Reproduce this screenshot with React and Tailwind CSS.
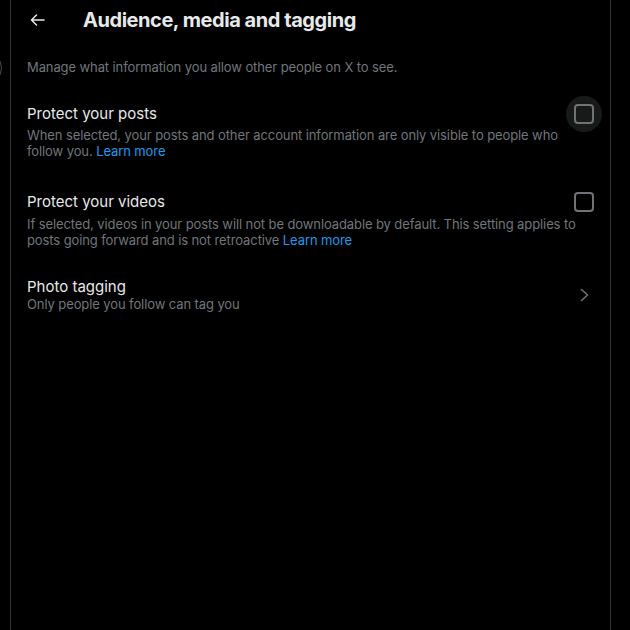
import { useState } from 'react';

const font = { fontFamily: 'Inter, "Noto Sans", sans-serif' };

const Checkbox = ({ checked, onChange, hovered }) => (
  <div className="relative h-[20px] w-[20px] shrink-0">
    {hovered && (
      <span className="absolute left-[-8px] top-[-8px] h-[36px] w-[36px] rounded-full bg-[#181919]" />
    )}
    <button
      type="button"
      onClick={onChange}
      className={`relative block h-[20px] w-[20px] rounded-[4px] border-2 ${checked ? 'border-[#1d9bf0] bg-[#1d9bf0]' : 'border-[#6e7378]'}`}
    />
  </div>
);

const LearnMore = () => <span className="text-[#1d9bf0]">Learn more</span>;

export default function App() {
  const [protectPosts, setProtectPosts] = useState(false);
  const [protectVideos, setProtectVideos] = useState(false);

  return (
    <div className="flex min-h-[630px] w-[630px] bg-black" style={font}>
      {/* edge of the left nav */}
      <div className="w-[10px] shrink-0 overflow-hidden">
        <div className="ml-[-32px] mt-[52px] h-[32px] w-[34px] rounded-full border border-[#4a4d50]" />
      </div>

      <main className="min-h-[630px] w-[601px] shrink-0 border-x border-[#2f3336]">
        {/* Header */}
        <div className="flex h-[40px] items-center px-4">
          <div className="flex w-[56px] items-center pl-[3px]">
            <svg width="15" height="12" viewBox="0 0 15 12" fill="none" stroke="#e7e9ea" strokeWidth="1.5" strokeLinecap="round" strokeLinejoin="round">
              <path d="M14 6H1.5M6.5 1L1.5 6l5 5" />
            </svg>
          </div>
          <h1 className="text-[20px] font-bold leading-6 tracking-[-0.45px] text-[#e7e9ea]">Audience, media and tagging</h1>
        </div>

        <p className="mt-[19px] px-4 text-[13px] leading-4 tracking-[-0.1px] text-[#71767b]">
          Manage what information you allow other people on X to see.
        </p>

        {/* Protect your posts */}
        <div className="mt-[29px] px-4">
          <div className="flex items-start justify-between">
            <p className="text-[15px] leading-5 text-[#e7e9ea]">Protect your posts</p>
            <Checkbox checked={protectPosts} onChange={() => setProtectPosts(!protectPosts)} hovered />
          </div>
          <p className="mt-[3px] text-[13px] leading-4 tracking-[-0.1px] text-[#71767b]">
            When selected, your posts and other account information are only visible to people who follow you. <LearnMore />
          </p>
        </div>

        {/* Protect your videos */}
        <div className="mt-[33px] px-4">
          <div className="flex items-start justify-between">
            <p className="text-[15px] leading-5 text-[#e7e9ea]">Protect your videos</p>
            <Checkbox checked={protectVideos} onChange={() => setProtectVideos(!protectVideos)} />
          </div>
          <p className="mt-[4px] text-[13px] leading-4 tracking-[-0.1px] text-[#71767b]">
            If selected, videos in your posts will not be downloadable by default. This setting applies to posts going forward and is not retroactive <LearnMore />
          </p>
        </div>

        {/* Photo tagging */}
        <div className="mt-[29px] flex items-center gap-4 px-4">
          <div className="min-w-0 flex-1">
            <p className="text-[15px] leading-5 text-[#e7e9ea]">Photo tagging</p>
            <p className="-mt-[1px] text-[13px] leading-4 tracking-[-0.1px] text-[#71767b]">Only people you follow can tag you</p>
          </div>
          <svg width="9" height="14" viewBox="0 0 9 14" fill="none" stroke="#71767b" strokeWidth="1.5" strokeLinecap="round" strokeLinejoin="round" className="mr-[5px]">
            <path d="M1.5 1.5L7.5 7l-6 5.5" />
          </svg>
        </div>
      </main>
    </div>
  );
}
